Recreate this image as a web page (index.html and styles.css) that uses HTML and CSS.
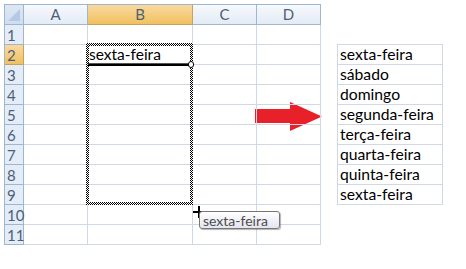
FILE: index.html
```html
<!DOCTYPE html>
<html lang="pt">
<head>
    <title>Preenchimento automático</title>
    <meta charset="UTF-8">
    <link rel="stylesheet" href="styles.css">
</head>
<body>
    <div class="pagina">
        <div class="planilha">
            <div class="grade">
                <div class="canto"><span class="triangulo"></span></div>
                <div class="col">A</div>
                <div class="col ativa">B</div>
                <div class="col">C</div>
                <div class="col">D</div>

                <div class="lin">1</div><div class="cel"></div><div class="cel"></div><div class="cel"></div><div class="cel"></div>
                <div class="lin ativa">2</div><div class="cel"></div><div class="cel texto">sexta-feira</div><div class="cel"></div><div class="cel"></div>
                <div class="lin">3</div><div class="cel"></div><div class="cel"></div><div class="cel"></div><div class="cel"></div>
                <div class="lin">4</div><div class="cel"></div><div class="cel"></div><div class="cel"></div><div class="cel"></div>
                <div class="lin">5</div><div class="cel"></div><div class="cel"></div><div class="cel"></div><div class="cel"></div>
                <div class="lin">6</div><div class="cel"></div><div class="cel"></div><div class="cel"></div><div class="cel"></div>
                <div class="lin">7</div><div class="cel"></div><div class="cel"></div><div class="cel"></div><div class="cel"></div>
                <div class="lin">8</div><div class="cel"></div><div class="cel"></div><div class="cel"></div><div class="cel"></div>
                <div class="lin">9</div><div class="cel"></div><div class="cel"></div><div class="cel"></div><div class="cel"></div>
                <div class="lin">10</div><div class="cel"></div><div class="cel"></div><div class="cel"></div><div class="cel"></div>
                <div class="lin">11</div><div class="cel"></div><div class="cel"></div><div class="cel"></div><div class="cel"></div>
            </div>

            <!-- seleção com formigas e alça de preenchimento -->
            <div class="selecao"></div>
            <div class="linha-ativa"><span class="alca"></span></div>
            <div class="cursor"></div>
            <div class="dica">sexta-feira</div>
        </div>

        <svg class="seta" width="68" height="30" viewBox="0 0 68 30">
            <polygon points="0,7 35,7 35,0 67,14.5 35,29 35,21 0,21" fill="#e8202a"/>
        </svg>

        <div class="lista">
            <div class="item">sexta-feira</div>
            <div class="item">sábado</div>
            <div class="item">domingo</div>
            <div class="item">segunda-feira</div>
            <div class="item">terça-feira</div>
            <div class="item">quarta-feira</div>
            <div class="item">quinta-feira</div>
            <div class="item">sexta-feira</div>
        </div>
    </div>
</body>
</html>
```

FILE: styles.css
```css
body {
    margin: 0;
    background: #fff;
    font-family: Lato, 'Liberation Sans', sans-serif;
    color: #000;
}

.pagina {
    display: flex;
    align-items: flex-start;
    padding: 4px 0 0 4px;
    height: 265px;
}

.planilha {
    position: relative;
}

.grade {
    display: grid;
    grid-template-columns: 19px 64px 105px 64px 64px;
    grid-template-rows: repeat(12, 20px);
    border-top: 1px solid #9eb6ce;
    border-left: 1px solid #9eb6ce;
}

.canto,
.col,
.lin,
.cel {
    box-sizing: border-box;
    border-right: 1px solid #d0d7e5;
    border-bottom: 1px solid #d0d7e5;
}

.canto {
    position: relative;
    background: linear-gradient(#dde7f3, #d0ddef);
    border-color: #9eb6ce;
}

.triangulo {
    position: absolute;
    right: 3px;
    bottom: 3px;
    width: 0;
    height: 0;
    border-left: 12px solid transparent;
    border-bottom: 12px solid #b5c9e4;
}

.col {
    background: linear-gradient(#f6f9fd, #e4ebf5);
    border-right-color: #9eb6ce;
    border-bottom-color: #9eb6ce;
    color: #4d5f77;
    font-size: 15px;
    text-align: center;
    line-height: 19px;
}

.lin {
    background: #e4ecf7;
    border-right-color: #9eb6ce;
    border-bottom-color: #9eb6ce;
    color: #4d5f77;
    font-size: 15px;
    line-height: 20px;
    padding-left: 2px;
}

.col.ativa,
.lin.ativa {
    background: linear-gradient(#f9d99f, #f1c15f);
    border-right-color: #c6a35c;
    border-bottom-color: #c6a35c;
}

.texto {
    font-size: 15.5px;
    line-height: 18px;
    padding-left: 1px;
    white-space: nowrap;
}

.selecao {
    position: absolute;
    left: 82px;
    top: 39px;
    width: 101px;
    height: 156px;
    padding: 3px;
    background: repeating-conic-gradient(#000 0 25%, #fff 0 50%) 0 0 / 2px 2px;
    -webkit-mask: linear-gradient(#000 0 0) content-box, linear-gradient(#000 0 0);
    -webkit-mask-composite: xor;
    mask-composite: exclude;
}

.linha-ativa {
    position: absolute;
    left: 84px;
    top: 59px;
    width: 103px;
    height: 2px;
    background: #000;
    border-top: 1px solid #555;
}

.alca {
    position: absolute;
    right: -3px;
    top: -3px;
    width: 4px;
    height: 5px;
    border: 1px solid #000;
    border-radius: 3px;
    background: #fff;
}

.cursor {
    position: absolute;
    left: 189px;
    top: 202px;
    width: 12px;
    height: 12px;
    background:
        linear-gradient(#000 0 0) 5px 0 / 2px 12px no-repeat,
        linear-gradient(#000 0 0) 0 5px / 12px 2px no-repeat;
}

.dica {
    position: absolute;
    left: 195px;
    top: 207px;
    width: 76px;
    height: 16px;
    border: 1px solid #767676;
    border-radius: 3px;
    background: linear-gradient(#fff, #e4e5f0);
    box-shadow: 1px 1px 1px rgba(0, 0, 0, 0.3);
    color: #4c4c4c;
    font-size: 14px;
    line-height: 17px;
    padding-left: 3px;
    box-sizing: content-box;
}

.seta {
    margin: 98px 0 0 -66px;
    display: block;
}

.lista {
    margin: 40px 0 0 14px;
    border-top: 1px solid #d0d7e5;
    border-left: 1px solid #d0d7e5;
    width: 105px;
}

.item {
    box-sizing: border-box;
    height: 20px;
    border-right: 1px solid #d0d7e5;
    border-bottom: 1px solid #d0d7e5;
    font-size: 15.7px;
    line-height: 19px;
    padding-left: 2px;
    white-space: nowrap;
}
```
